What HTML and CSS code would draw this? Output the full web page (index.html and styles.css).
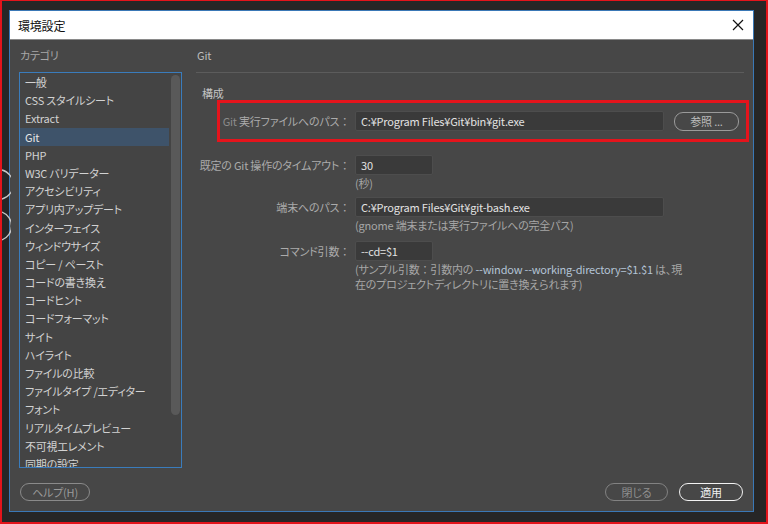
FILE: index.html
```html
<!DOCTYPE html>
<html lang="ja">
<head>
    <meta charset="UTF-8">
    <meta name="viewport" content="width=device-width, initial-scale=1.0">
    <title>環境設定</title>
    <link rel="stylesheet" href="styles.css">
</head>
<body>
    <div class="frame">
        <!-- bits of the window behind the dialog -->
        <svg class="behind" width="9" height="80" viewBox="0 0 9 80">
            <path d="M0 2 A 15 15 0 0 1 0 31" fill="none" stroke="#c8c8c8" stroke-width="1.3"/>
            <path d="M0 44 A 15 15 0 0 1 0 72" fill="none" stroke="#c8c8c8" stroke-width="1.3"/>
        </svg>

        <div class="dialog">
            <div class="titlebar">
                <span class="title">環境設定</span>
                <svg class="close" width="12" height="12" viewBox="0 0 12 12">
                    <path d="M1 1 L11 11 M11 1 L1 11" stroke="#111" stroke-width="1.2"/>
                </svg>
            </div>

            <div class="body">
                <div class="main">
                    <!-- category list -->
                    <div class="side">
                        <div class="side-label">カテゴリ</div>
                        <div class="list">
                            <div class="items">
                                <div class="item">一般</div>
                                <div class="item">CSS スタイルシート</div>
                                <div class="item">Extract</div>
                                <div class="item selected">Git</div>
                                <div class="item">PHP</div>
                                <div class="item">W3C バリデーター</div>
                                <div class="item">アクセシビリティ</div>
                                <div class="item">アプリ内アップデート</div>
                                <div class="item">インターフェイス</div>
                                <div class="item">ウィンドウサイズ</div>
                                <div class="item">コピー / ペースト</div>
                                <div class="item">コードの書き換え</div>
                                <div class="item">コードヒント</div>
                                <div class="item">コードフォーマット</div>
                                <div class="item">サイト</div>
                                <div class="item">ハイライト</div>
                                <div class="item">ファイルの比較</div>
                                <div class="item">ファイルタイプ /エディター</div>
                                <div class="item">フォント</div>
                                <div class="item">リアルタイムプレビュー</div>
                                <div class="item">不可視エレメント</div>
                                <div class="item">同期の設定</div>
                            </div>
                            <div class="scroll"><div class="thumb"></div></div>
                        </div>
                    </div>

                    <!-- Git settings -->
                    <div class="panel">
                        <div class="panel-head">Git</div>
                        <div class="group">構成</div>

                        <div class="row first">
                            <label class="label"><span class="dim">Git</span> 実行ファイルへのパス<span class="colon">：</span></label>
                            <div class="field">
                                <div class="input long">C:¥Program Files¥Git¥bin¥git.exe</div>
                                <button class="pill browse">参照 ...</button>
                            </div>
                        </div>

                        <div class="row timeout">
                            <label class="label">既定の Git 操作のタイムアウト<span class="colon">：</span></label>
                            <div class="field">
                                <div class="input short">30</div>
                            </div>
                        </div>
                        <div class="hint">(秒)</div>

                        <div class="row terminal">
                            <label class="label">端末へのパス<span class="colon">：</span></label>
                            <div class="field">
                                <div class="input long">C:¥Program Files¥Git¥git-bash.exe</div>
                            </div>
                        </div>
                        <div class="hint">(gnome 端末または実行ファイルへの完全パス)</div>

                        <div class="row args">
                            <label class="label">コマンド引数<span class="colon">：</span></label>
                            <div class="field">
                                <div class="input short">--cd=$1</div>
                            </div>
                        </div>
                        <div class="hint multi">
                            <div>(サンプル引数<span class="colon">：</span>引数内の <span class="code">--window --working-directory=$1.$1</span> は、現</div>
                            <div>在のプロジェクトディレクトリに置き換えられます)</div>
                        </div>
                    </div>
                </div>

                <div class="footer">
                    <button class="pill help">ヘルプ(H)</button>
                    <div class="actions">
                        <button class="pill close-btn">閉じる</button>
                        <button class="pill apply">適用</button>
                    </div>
                </div>
            </div>
        </div>

        <!-- annotation -->
        <div class="marker"></div>
    </div>
</body>
</html>
```

FILE: styles.css
```css
body {
    margin: 0;
    background: #262626;
    font-family: "Noto Sans CJK JP", "Noto Sans", sans-serif;
    font-size: 11px;
    letter-spacing: -0.2px;
    font-feature-settings: "palt";
}

.frame {
    position: relative;
    width: 768px;
    height: 524px;
    box-sizing: border-box;
    border: 2px solid #e3141b;
    border-top-width: 1px;
    padding: 9px 0 0 7px;
    overflow: hidden;
}

.behind {
    position: absolute;
    left: 0;
    top: 167px;
}

.dialog {
    width: 745px;
    height: 502px;
    box-sizing: border-box;
    border: 1px solid #3a78b6;
    background: #474747;
    display: flex;
    flex-direction: column;
}

.titlebar {
    height: 28px;
    background: #fff;
    border-bottom: 1px solid #8a8a8a;
    display: flex;
    align-items: center;
    justify-content: space-between;
    padding: 0 9px 0 8px;
}

.title {
    font-size: 12px;
    color: #111;
}

.body {
    flex: 1;
    display: flex;
    flex-direction: column;
    padding: 7px 9px 10px 9px;
}

.main {
    flex: 1;
    display: flex;
    gap: 14px;
    min-height: 0;
}

.side {
    width: 163px;
    display: flex;
    flex-direction: column;
}

.side-label {
    line-height: 16px;
    color: #a8a8a8;
    padding-left: 1px;
    margin-bottom: 9px;
}

.list {
    height: 396px;
    box-sizing: border-box;
    border: 1px solid #3a7cbc;
    background: #444;
    display: flex;
    overflow: hidden;
}

.items {
    width: 149px;
}

.item {
    height: 18.2px;
    line-height: 18.2px;
    padding-left: 5px;
    color: #d2d2d2;
    white-space: nowrap;
}

.item.selected {
    background: #3e536a;
    color: #e6e6e6;
}

.scroll {
    flex: 1;
    padding: 2px 1px 0 2px;
}

.thumb {
    width: 9px;
    height: 340px;
    border-radius: 5px;
    background: #595959;
}

.panel {
    flex: 1;
    color: #b0b0b0;
}

.panel-head {
    line-height: 16px;
    color: #bdbdbd;
    padding: 0 0 9px 1px;
    border-bottom: 1px solid #5c5c5c;
}

.group {
    line-height: 16px;
    margin: 12px 0 0 6px;
    color: #c4c4c4;
}

.row {
    display: flex;
    align-items: center;
    gap: 5px;
}

.row.first { margin-top: 10px; }
.row.timeout { margin-top: 24px; }
.row.terminal { margin-top: 6px; }
.row.args { margin-top: 8px; }

.label {
    width: 154px;
    text-align: right;
    white-space: nowrap;
    color: #ababab;
}

.colon {
    font-feature-settings: normal;
}

.dim {
    color: #8c8c8c;
}

.field {
    display: flex;
    align-items: center;
    gap: 10px;
}

.input {
    height: 20px;
    box-sizing: border-box;
    line-height: 18px;
    padding: 0 5px;
    background: #3a3a3a;
    border: 1px solid #4d4d4d;
    border-radius: 2px;
    color: #e2e2e2;
    white-space: nowrap;
}

.input.long { width: 309px; }
.input.short { width: 78px; }

.hint {
    line-height: 16px;
    margin-left: 159px;
    color: #a6a6a6;
}

.hint.multi {
    line-height: 14.5px;
    margin-top: 1px;
}

.code {
    color: #b4c4d6;
}

.pill {
    font-family: inherit;
    font-size: 11px;
    letter-spacing: inherit;
    font-feature-settings: inherit;
    height: 18px;
    line-height: 14px;
    padding: 0;
    background: transparent;
    border: 1.5px solid #9a9a9a;
    border-radius: 9px;
    color: #bcbcbc;
}

.browse {
    width: 65px;
    height: 19px;
}

.footer {
    display: flex;
    justify-content: space-between;
    align-items: center;
    margin-top: 15px;
    padding: 0 1px 0 1px;
}

.help {
    width: 70px;
    color: #9a9a9a;
    border-color: #8a8a8a;
}

.actions {
    display: flex;
    gap: 11px;
}

.close-btn {
    width: 63px;
    color: #8f8f8f;
    border-color: #828282;
}

.apply {
    width: 64px;
    color: #f2f2f2;
    border-color: #f2f2f2;
}

.marker {
    position: absolute;
    left: 215px;
    top: 99px;
    width: 532px;
    height: 42px;
    box-sizing: border-box;
    border: 3px solid #e5141c;
}
```
